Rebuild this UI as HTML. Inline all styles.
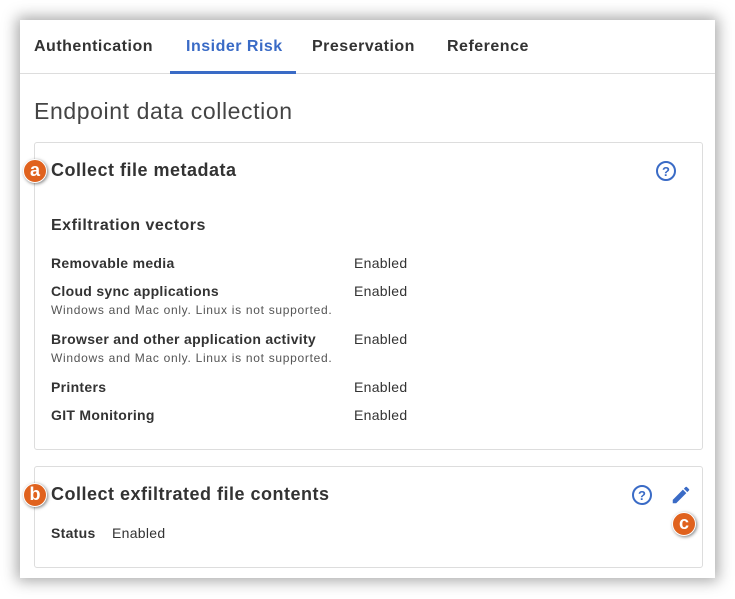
<!DOCTYPE html>
<html><head><style>
body{margin:0;width:735px;height:599px;background:#fff;font-family:"Liberation Sans",sans-serif;position:relative;overflow:hidden}
.panel{position:absolute;left:20px;top:20px;width:695px;height:558px;background:#fff;box-shadow:0 0 14px 3px rgba(0,0,0,.35)}
.t{position:absolute;font-size:16px;font-weight:bold;color:#333;top:38px;letter-spacing:0.5px}
.card{position:absolute;left:34px;width:667px;border:1px solid #ddd;border-radius:3px;background:#fff}
.a{position:absolute;color:#333;font-size:14px;letter-spacing:0.3px}
.b{font-weight:bold}
.s{position:absolute;font-size:12px;color:#555;letter-spacing:0.7px}
.badge{position:absolute;width:22px;height:22px;border-radius:50%;background:#e0621e;color:#fff;font-weight:bold;font-size:18px;text-align:center;line-height:20px;border:1px solid #fff;box-shadow:1px 1px 3px rgba(0,0,0,.5)}
</style></head><body>
<div class="panel"></div>
<div class="t" style="left:34px">Authentication</div>
<div class="t" style="left:186px;color:#3a6bc6">Insider Risk</div>
<div class="t" style="left:312px">Preservation</div>
<div class="t" style="left:447px">Reference</div>
<div style="position:absolute;left:20px;top:73px;width:695px;height:1px;background:#ddd"></div>
<div style="position:absolute;left:170px;top:71px;width:126px;height:3px;background:#3a6bc6"></div>
<div style="position:absolute;left:34px;top:98px;font-size:23px;color:#444;letter-spacing:0.6px">Endpoint data collection</div>
<div class="card" style="top:142px;height:306px"></div>
<div class="card" style="top:466px;height:100px"></div>
<div class="a b" style="left:51px;top:160px;font-size:18px;letter-spacing:0.5px">Collect file metadata</div>
<svg style="position:absolute;left:655px;top:160px" width="22" height="22" viewBox="0 0 22 22"><circle cx="11" cy="11" r="9" fill="none" stroke="#3a6bc6" stroke-width="2"/><text x="11" y="16" text-anchor="middle" font-size="13" font-weight="bold" fill="#3a6bc6" font-family="Liberation Sans">?</text></svg>
<div class="a b" style="left:51px;top:217px;font-size:16px;letter-spacing:0.5px">Exfiltration vectors</div>
<div class="a b" style="left:51px;top:255px">Removable media</div><div class="a" style="left:354px;top:255px">Enabled</div>
<div class="a b" style="left:51px;top:283px">Cloud sync applications</div><div class="a" style="left:354px;top:283px">Enabled</div>
<div class="s" style="left:51px;top:303px">Windows and Mac only. Linux is not supported.</div>
<div class="a b" style="left:51px;top:331px">Browser and other application activity</div><div class="a" style="left:354px;top:331px">Enabled</div>
<div class="s" style="left:51px;top:351px">Windows and Mac only. Linux is not supported.</div>
<div class="a b" style="left:51px;top:379px">Printers</div><div class="a" style="left:354px;top:379px">Enabled</div>
<div class="a b" style="left:51px;top:407px">GIT Monitoring</div><div class="a" style="left:354px;top:407px">Enabled</div>
<div class="a b" style="left:51px;top:484px;font-size:18px;letter-spacing:0.5px">Collect exfiltrated file contents</div>
<svg style="position:absolute;left:631px;top:484px" width="22" height="22" viewBox="0 0 22 22"><circle cx="11" cy="11" r="9" fill="none" stroke="#3a6bc6" stroke-width="2"/><text x="11" y="16" text-anchor="middle" font-size="13" font-weight="bold" fill="#3a6bc6" font-family="Liberation Sans">?</text></svg>
<svg style="position:absolute;left:670px;top:484px" width="22" height="22" viewBox="0 0 24 24"><path d="M3 17.25V21h3.75L17.81 9.94l-3.75-3.75L3 17.25zM20.71 7.04a1 1 0 000-1.41l-2.34-2.34a1 1 0 00-1.41 0l-1.83 1.83 3.75 3.75 1.83-1.83z" fill="#3a6bc6"/></svg>
<div class="a b" style="left:51px;top:525px">Status</div><div class="a" style="left:112px;top:525px">Enabled</div>
<div class="badge" style="left:23px;top:159px">a</div>
<div class="badge" style="left:23px;top:483px">b</div>
<div class="badge" style="left:672px;top:512px">c</div>
</body></html>
